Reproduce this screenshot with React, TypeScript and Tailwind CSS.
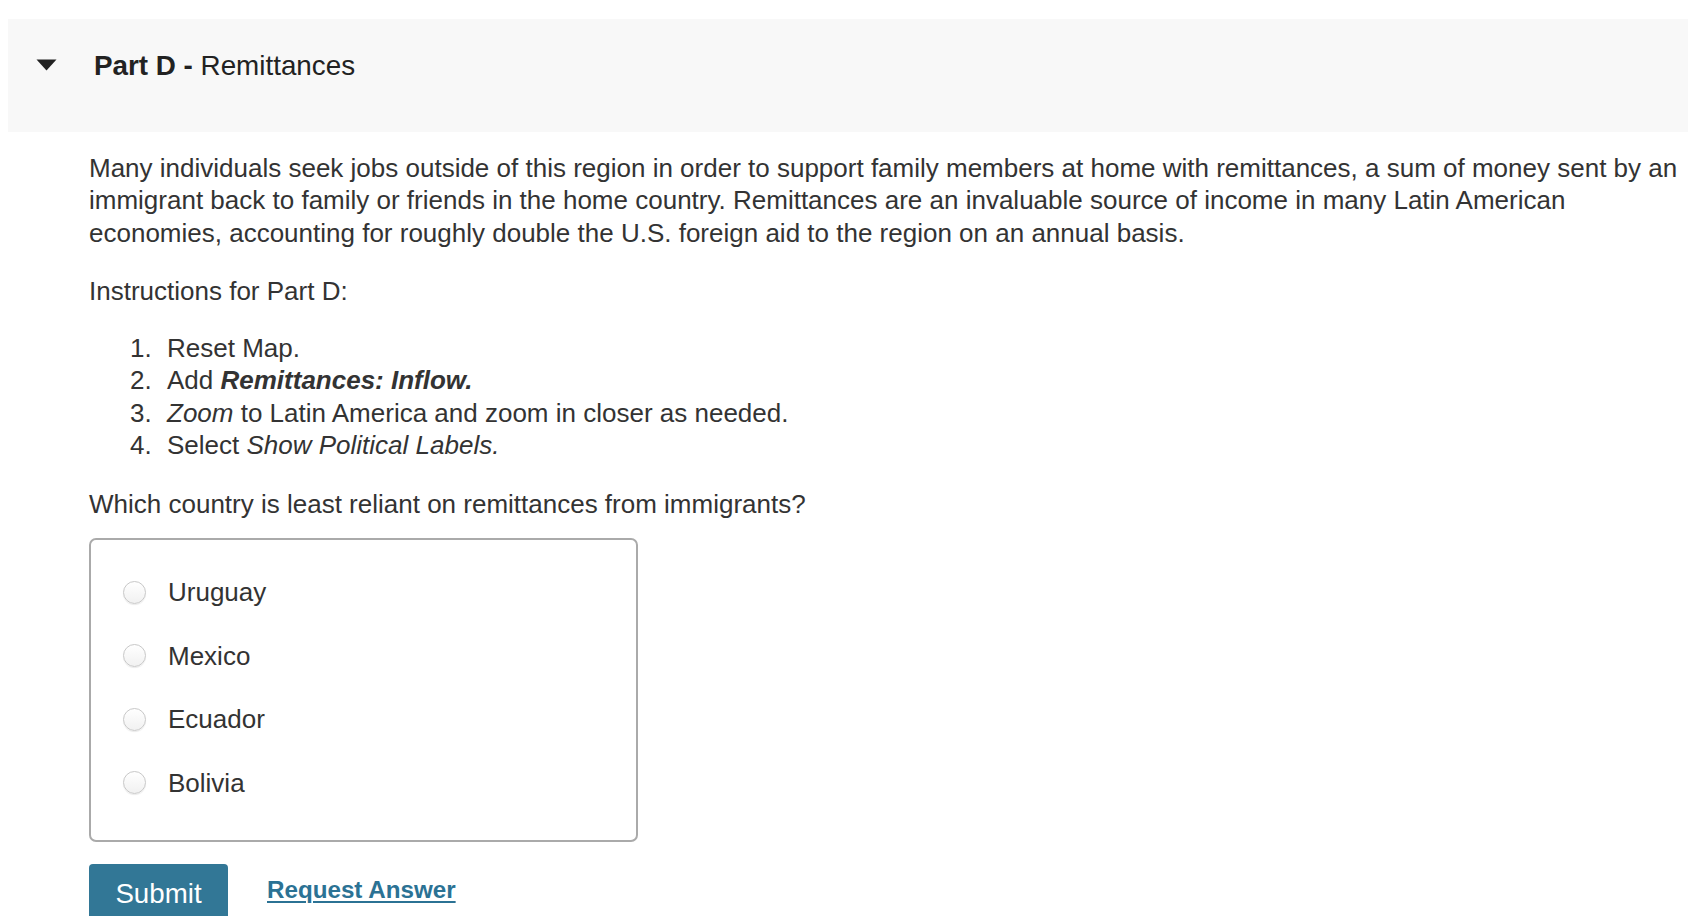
import React from "react";

const font = { fontFamily: '"Liberation Sans", Arial, Helvetica, sans-serif' };

function Radio({ label }: { label: string }) {
  return (
    <label className="flex items-center h-[63.5px]">
      <span className="ml-[32px] w-[23px] h-[23px] rounded-full border border-[#c8c8c8] bg-gradient-to-b from-[#ffffff] to-[#f1f1f1] shadow-[0_1px_1px_rgba(0,0,0,0.08)]" />
      <span className="ml-[22px] text-[26px] text-[#333333] leading-[30px]">{label}</span>
    </label>
  );
}

export default function App() {
  return (
    <div className="min-h-[916px] bg-white text-[#333333] overflow-hidden" style={font}>
      <div className="pt-[19px] pl-[8px] pr-[2px]">
        <div className="h-[113px] bg-[#f8f8f8] flex items-start">
          <svg width="21" height="12" viewBox="0 0 21 12" className="ml-[28px] mt-[40px]">
            <path d="M0.5 0.5 H20.5 L10.5 11.5 Z" fill="#222222" />
          </svg>
          <div className="ml-[37px] mt-[31px] text-[27.8px] text-[#222222] leading-[32px]">
            <span className="font-bold">Part D - </span>
            <span>Remittances</span>
          </div>
        </div>
      </div>
      <div className="pl-[89px] pr-[8px] text-[26px] leading-[32.3px]">
        <p className="mt-[20px]">
          Many individuals seek jobs outside of this region in order to support family members at home with remittances, a sum of money sent by an immigrant back to family or friends in the home country. Remittances are an invaluable source of income in many Latin American economies, accounting for roughly double the U.S. foreign aid to the region on an annual basis.
        </p>
        <p className="mt-[26px]">Instructions for Part D:</p>
        <ol className="mt-[25px]">
          <li className="flex">
            <span className="w-[78px] pl-[41px]">1.</span>
            <span>Reset Map.</span>
          </li>
          <li className="flex">
            <span className="w-[78px] pl-[41px]">2.</span>
            <span>
              Add <b className="italic">Remittances: Inflow.</b>
            </span>
          </li>
          <li className="flex">
            <span className="w-[78px] pl-[41px]">3.</span>
            <span>
              <i>Zoom</i> to Latin America and zoom in closer as needed.
            </span>
          </li>
          <li className="flex">
            <span className="w-[78px] pl-[41px]">4.</span>
            <span>
              Select <i>Show Political Labels.</i>
            </span>
          </li>
        </ol>
        <p className="mt-[27px]">Which country is least reliant on remittances from immigrants?</p>
        <div className="mt-[17px] w-[549px] h-[304px] border-2 border-[#aaaaaa] rounded-[7px] pt-[21px] box-border">
          <Radio label="Uruguay" />
          <Radio label="Mexico" />
          <Radio label="Ecuador" />
          <Radio label="Bolivia" />
        </div>
        <div className="mt-[22px] flex items-start">
          <button className="w-[139px] h-[60px] bg-[#327796] rounded-t-[4px] text-white text-[27.7px] leading-[53px] text-center">
            Submit
          </button>
          <a className="ml-[39px] mt-[11px] text-[24.2px] font-bold text-[#2b7294] underline underline-offset-[3px] decoration-2 leading-[30px]" href="#">
            Request Answer
          </a>
        </div>
      </div>
    </div>
  );
}
